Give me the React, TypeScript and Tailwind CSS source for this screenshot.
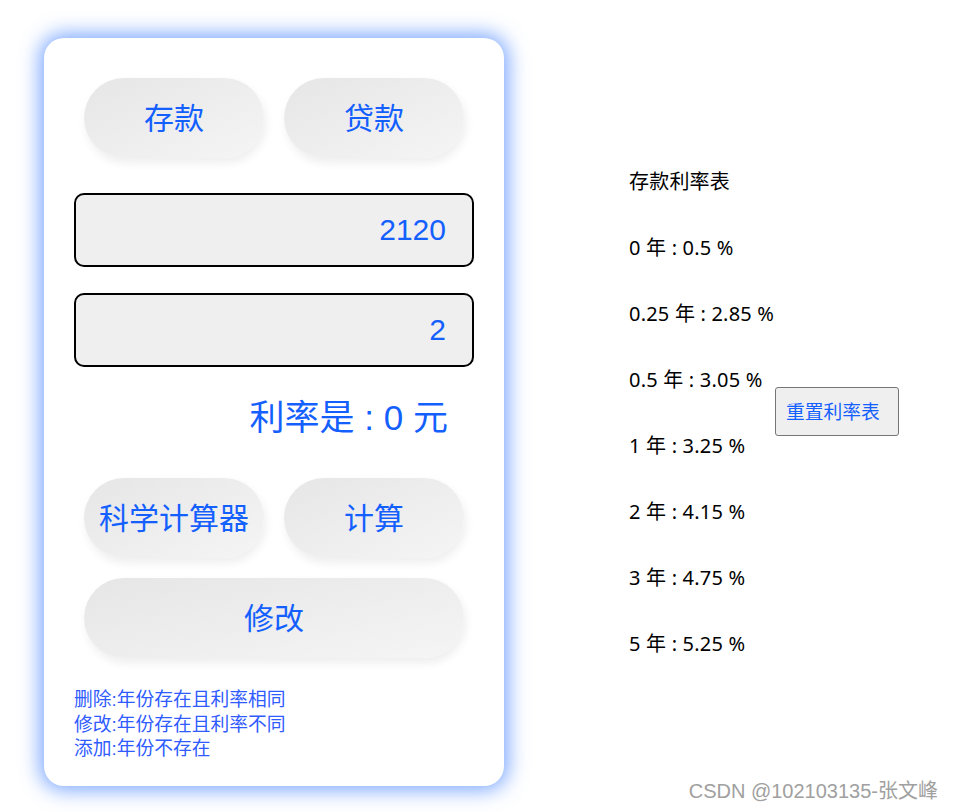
import { useState } from 'react';

const RATES: Array<[string, string]> = [
  ['0', '0.5'],
  ['0.25', '2.85'],
  ['0.5', '3.05'],
  ['1', '3.25'],
  ['2', '4.15'],
  ['3', '4.75'],
  ['5', '5.25'],
];

const pill =
  'h-[80px] rounded-full bg-gradient-to-br from-[#e6e6e6] to-[#f5f5f5] shadow-[2px_5px_10px_rgba(0,0,0,0.07)] text-[30px] text-[#1460ff] flex items-center justify-center';

export default function App() {
  const [amount, setAmount] = useState('2120');
  const [years, setYears] = useState('2');
  const [result] = useState(0);

  return (
    <div className="relative min-h-screen w-[954px] h-[812px] bg-white flex items-start font-['Liberation_Sans','Noto_Sans_CJK_SC',sans-serif]">
      {/* calculator card */}
      <div className="ml-[44px] mt-[38px] w-[460px] h-[748px] rounded-[20px] bg-white shadow-[0_0_20px_4px_rgba(90,145,255,0.8)] px-[30px] pt-[40px] flex flex-col">
        <div className="flex gap-[20px] px-[10px]">
          <button className={`${pill} w-[180px]`}>存款</button>
          <button className={`${pill} w-[180px]`}>贷款</button>
        </div>

        <input
          value={amount}
          onChange={(e) => setAmount(e.target.value)}
          className="mt-[35px] w-[400px] h-[74px] rounded-[10px] border-2 border-black bg-[#efefef] text-right pr-[26px] text-[30px] text-[#1460ff] outline-none"
        />
        <input
          value={years}
          onChange={(e) => setYears(e.target.value)}
          className="mt-[26px] w-[400px] h-[74px] rounded-[10px] border-2 border-black bg-[#efefef] text-right pr-[26px] text-[30px] text-[#1460ff] outline-none"
        />

        <div className="mt-[31px] h-[40px] leading-[40px] text-right pr-[26px] text-[35px] text-[#1460ff]">
          利率是 : {result} 元
        </div>

        <div className="mt-[40px] flex gap-[20px] px-[10px]">
          <button className={`${pill} w-[180px]`}>科学计算器</button>
          <button className={`${pill} w-[180px]`}>计算</button>
        </div>
        <div className="mt-[20px] px-[10px]">
          <button className={`${pill} w-[380px]`}>修改</button>
        </div>

        <div className="mt-[30px] text-[18.75px] leading-[24.5px] text-[#2f5bff]">
          <div>删除:年份存在且利率相同</div>
          <div>修改:年份存在且利率不同</div>
          <div>添加:年份不存在</div>
        </div>
      </div>

      {/* rate table */}
      <div className="ml-[125px] mt-[169px] flex items-center font-['Noto_Sans','Noto_Sans_CJK_SC',sans-serif]">
        <div className="w-[146px] flex flex-col gap-[40px] text-[20px] leading-[26px] tracking-[0.2px] text-black whitespace-nowrap">
          <div>存款利率表</div>
          {RATES.map(([y, r]) => (
            <div key={y}>
              {y} 年 : {r} %
            </div>
          ))}
        </div>
        <button className="mb-[4px] w-[124px] h-[49px] rounded-[3px] border border-[#767676] bg-[#efefef] text-[18.75px] text-[#1460ff] text-left pl-[10px] font-['Noto_Sans_CJK_SC',sans-serif]">
          重置利率表
        </button>
      </div>

      <div className="absolute right-[16px] bottom-[6px] text-[20px] text-[#a0a0a0] [text-shadow:0_0_2px_#fff] font-['Liberation_Sans','Noto_Sans_CJK_SC',sans-serif]">
        CSDN @102103135-张文峰
      </div>
    </div>
  );
}
